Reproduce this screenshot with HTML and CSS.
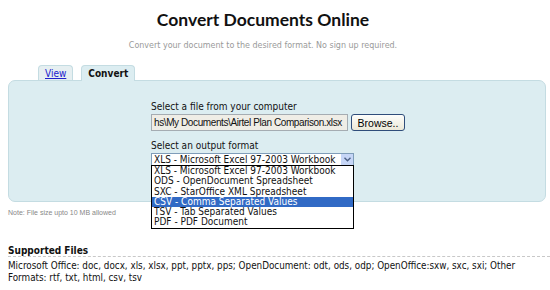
FILE: index.html
```html
<!DOCTYPE html>
<html lang="en">
<head>
    <meta charset="UTF-8">
    <title>Convert Documents Online</title>
    <link rel="stylesheet" href="styles.css">
</head>
<body>
    <div class="header">
        <h1>Convert Documents Online</h1>
        <p class="subtitle">Convert your document to the desired format. No sign up required.</p>
    </div>

    <div class="tabs">
        <a class="tab" href="#">View</a>
        <span class="tab active">Convert</span>
    </div>

    <div class="panel">
        <form class="convert-form">
            <label class="field-label">Select a file from your computer</label>
            <div class="file-row">
                <span class="file-path">hs\My Documents\Airtel Plan Comparison.xlsx</span>
                <button type="button" class="browse-btn">Browse..</button>
            </div>
            <label class="field-label">Select an output format</label>
            <div class="select-wrap">
                <div class="select-box">
                    <span class="select-value">XLS - Microsoft Excel 97-2003 Workbook</span>
                    <span class="select-arrow">
                        <svg width="7" height="5" viewBox="0 0 7 5"><path d="M0.5 0.8 L3.5 3.8 L6.5 0.8" fill="none" stroke="#4d6185" stroke-width="1.4"/></svg>
                    </span>
                </div>
                <ul class="select-list">
                    <li>XLS - Microsoft Excel 97-2003 Workbook</li>
                    <li>ODS - OpenDocument Spreadsheet</li>
                    <li>SXC - StarOffice XML Spreadsheet</li>
                    <li class="selected">CSV - Comma Separated Values</li>
                    <li>TSV - Tab Separated Values</li>
                    <li>PDF - PDF Document</li>
                </ul>
            </div>
        </form>
    </div>

    <p class="note">Note: File size upto 10 MB allowed</p>

    <div class="supported">
        <h3>Supported Files</h3>
        <p>Microsoft Office: doc, docx, xls, xlsx, ppt, pptx, pps; OpenDocument: odt, ods, odp; OpenOffice:sxw, sxc, sxi; Other Formats: rtf, txt, html, csv, tsv</p>
    </div>
</body>
</html>
```

FILE: styles.css
```css
:root {
    --panel-bg: #dcedf1;
    --panel-border: #c4dce2;
    --text-color: #111;
    --muted: #9a9a9a;
    --highlight: #316ac5;
}
* {
    margin: 0;
    padding: 0;
    box-sizing: border-box;
}
body {
    font-family: 'DejaVu Sans Condensed', 'DejaVu Sans', Verdana, sans-serif;
    font-size: 9.8px;
    color: var(--text-color);
    background: #fff;
    width: 550px;
}

.header {
    text-align: center;
    padding: 9px 24px 0 0;
}
.header h1 {
    font-family: Lato, 'Open Sans', sans-serif;
    font-size: 17.5px;
    font-weight: 700;
    line-height: 22px;
    color: #111;
}
.subtitle {
    font-size: 8.9px;
    color: var(--muted);
    margin-top: 8px;
    line-height: 12px;
}

.tabs {
    display: flex;
    gap: 8px;
    padding-left: 38px;
    margin-top: 13px;
    height: 16px;
    align-items: flex-end;
}
.tab {
    display: block;
    font-size: 10px;
    line-height: 13px;
    padding: 1px 6px 0;
    border: 1px solid var(--panel-border);
    border-bottom: none;
    border-radius: 4px 4px 0 0;
    background: #e6eff1;
    height: 15px;
}
a.tab {
    color: #2222cc;
    text-decoration: underline;
}
.tab.active {
    background: var(--panel-bg);
    font-weight: 700;
    height: 16px;
    padding: 1px 6px 0;
    position: relative;
    top: 1px;
}

.panel {
    margin: 0 4px 0 8px;
    height: 122px;
    background: var(--panel-bg);
    border: 1px solid var(--panel-border);
    border-radius: 7px;
    padding: 20px 0 0 142px;
}
.convert-form {
    display: flex;
    flex-direction: column;
    align-items: flex-start;
}
.field-label {
    font-size: 10px;
    line-height: 12px;
    margin-bottom: 1px;
}
.file-row {
    display: flex;
    gap: 3px;
    margin-bottom: 9px;
}
.file-path {
    width: 197px;
    height: 17px;
    border: 1px solid #a5acb2;
    background: #efede6;
    font-family: 'Liberation Sans', Tahoma, sans-serif;
    font-size: 10px;
    letter-spacing: -0.4px;
    line-height: 15px;
    padding-left: 2px;
    white-space: nowrap;
    overflow: hidden;
}
.browse-btn {
    height: 17px;
    width: 54px;
    border: 1px solid #2f4d7a;
    border-radius: 3px;
    background: linear-gradient(#fdfdfb, #ece9d8);
    font-family: 'Liberation Sans', Tahoma, sans-serif;
    font-size: 10.5px;
    color: #000;
}

.select-wrap {
    position: relative;
}
.select-box {
    display: flex;
    width: 203px;
    height: 13px;
    border: 1px solid #7f9db9;
    background: #fff;
}
.select-value {
    flex: 1;
    font-size: 10px;
    line-height: 11px;
    padding-left: 2px;
    white-space: nowrap;
}
.select-arrow {
    width: 13px;
    background: #c6d6f7;
    border-left: 1px solid #fff;
    display: flex;
    align-items: center;
    justify-content: center;
}
.select-list {
    position: absolute;
    left: 0;
    top: 12px;
    width: 203px;
    list-style: none;
    background: #fff;
    border: 1px solid #000;
    z-index: 2;
}
.select-list li {
    font-size: 10px;
    line-height: 10.3px;
    padding-left: 2px;
    white-space: nowrap;
}
.select-list li.selected {
    background: var(--highlight);
    color: #fff;
}

.note {
    font-family: 'Liberation Sans', Arial, sans-serif;
    font-size: 7px;
    color: #888;
    padding-left: 8px;
    margin-top: 7px;
}

.supported {
    margin-top: 29px;
    padding-left: 8px;
}
.supported h3 {
    font-size: 10px;
    font-weight: 700;
    line-height: 11px;
    padding-bottom: 0;
    border-bottom: 1px dashed #c8c8c8;
    margin-bottom: 3px;
}
.supported p {
    line-height: 12px;
    padding-right: 20px;
}
```
